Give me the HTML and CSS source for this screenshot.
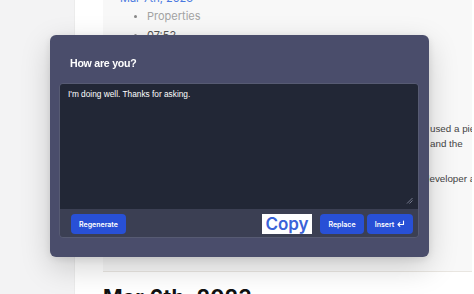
FILE: index.html
```html
<!DOCTYPE html>
<html>
<head>
<meta charset="utf-8">
<link rel="stylesheet" href="styles.css">
</head>
<body>
<div class="page">
  <aside class="sidebar"></aside>
  <div class="gutter"></div>
  <main class="main">
    <section class="day">
      <a class="date-link">Mar 7th, 2023</a>
      <ul class="items">
        <li class="muted">Properties</li>
        <li>07:52</li>
      </ul>
      <div class="para">
        <p>used a piece</p>
        <p>and the</p>
        <p class="gap">developer and</p>
      </div>
    </section>
    <h2 class="day-title">Mar 6th, 2023</h2>
  </main>
</div>

<div class="modal">
  <h1 class="modal-title">How are you?</h1>
  <div class="box">
    <div class="textarea">I'm doing well. Thanks for asking.
      <svg class="grip" width="7" height="7" viewBox="0 0 7 7"><path d="M1 6.5 L6.5 1 M3.5 6.5 L6.5 3.5" stroke="#8a8fa3" stroke-width="0.8" fill="none"/></svg>
    </div>
    <div class="footer">
      <button class="btn btn-regen">Regenerate</button>
      <span class="spacer"></span>
      <span class="copy">Copy</span>
      <button class="btn btn-replace">Replace</button>
      <button class="btn btn-insert">Insert
        <svg width="9" height="8" viewBox="0 0 9 8"><path d="M7.5 1 V4.5 H2 M3.8 2.7 L2 4.5 L3.8 6.3" stroke="#fff" stroke-width="1.1" fill="none" stroke-linecap="round" stroke-linejoin="round"/></svg>
      </button>
    </div>
  </div>
</div>
</body>
</html>
```

FILE: styles.css
```css
* { box-sizing: border-box; margin: 0; padding: 0; }
html, body { width: 474px; height: 294px; overflow: hidden; }
body {
  font-family: "Liberation Sans", Arial, sans-serif;
  background: #ffffff;
}
.page {
  display: flex;
  height: 294px;
}
.sidebar {
  width: 75px;
  flex: none;
  background: #f3f3f4;
  border-right: 1px solid #ececec;
}
.gutter {
  width: 28px;
  flex: none;
  background: #ffffff;
}
.main {
  width: 369px;
  flex: none;
  overflow: hidden;
}
.day {
  height: 272px;
  background: #f8f8f8;
  border-bottom: 1px solid #e9e6e1;
  overflow: hidden;
}
.date-link {
  display: block;
  margin-top: -8px;
  margin-left: 17px;
  color: #4a78e0;
  font-family: Inter, "Liberation Sans", sans-serif;
  font-size: 11px;
  line-height: 13px;
}
.items {
  margin-left: 44px;
  margin-top: 2px;
  font-family: Inter, "Liberation Sans", sans-serif;
  font-size: 11px;
  line-height: 19px;
  color: #555;
}
.items li::marker { color: #888; font-size: 9px; }
.muted { color: #a3a3a3; }
.para {
  margin-top: 76px;
  margin-left: 327px;
  white-space: nowrap;
  font-family: "Liberation Sans", Arial, sans-serif;
  font-size: 9.8px;
  color: #444;
  line-height: 15px;
}
.para p.gap { margin-top: 20px; text-indent: -6px; }
.day-title {
  margin-top: 13px;
  font-family: Inter, "Liberation Sans", sans-serif;
  font-size: 21px;
  font-weight: 700;
  color: #111;
  letter-spacing: 0.3px;
}

.modal {
  position: fixed;
  left: 50px;
  top: 35px;
  width: 379px;
  height: 222px;
  background: #4a4d6b;
  border-radius: 6px;
  padding: 20px 10px 19px 9px;
  box-shadow: 0 10px 30px rgba(0,0,0,0.18), 0 2px 8px rgba(0,0,0,0.1);
  display: flex;
  flex-direction: column;
}
.modal-title {
  font-size: 10.6px;
  font-weight: 700;
  letter-spacing: -0.25px;
  color: #ffffff;
  margin-left: 11px;
  line-height: 16px;
  height: 28px;
}
.box {
  flex: 1;
  display: flex;
  flex-direction: column;
  border: 1px solid #575b73;
  border-radius: 4px;
  overflow: hidden;
}
.textarea {
  position: relative;
  height: 125px;
  background: #222736;
  color: #ffffff;
  font-size: 8.3px;
  line-height: 11px;
  padding: 5px 8px;
}
.grip { position: absolute; right: 5px; bottom: 5px; }
.footer {
  flex: 1;
  background: #3b3f53;
  display: flex;
  align-items: flex-start;
  padding: 5px 5px 0 11px;
}
.spacer { flex: 1; }
.btn {
  height: 20px;
  border: none;
  border-radius: 4px;
  background: #2850d6;
  color: #ffffff;
  font-family: Inter, "Liberation Sans", sans-serif;
  font-size: 7px;
  font-weight: 600;
  display: flex;
  align-items: center;
  justify-content: center;
  gap: 2px;
}
.btn-regen { width: 55px; }
.btn-replace { width: 44px; margin-left: 8px; }
.btn-insert { width: 46px; margin-left: 3px; }
.copy {
  width: 50px;
  height: 20px;
  background: #ffffff;
  color: #3a62d8;
  font-family: Inter, "Liberation Sans", sans-serif;
  font-size: 17px;
  font-weight: 600;
  line-height: 20px;
  text-align: center;
}
```
